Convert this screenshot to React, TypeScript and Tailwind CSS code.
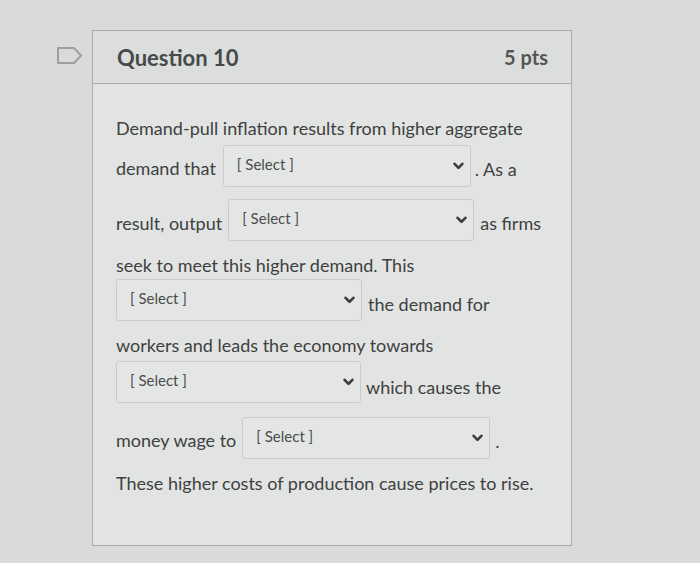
import React from "react";

function Chevron() {
  return (
    <svg width="11" height="8" viewBox="0 0 11 8" className="shrink-0">
      <path d="M1.6 1.8 L5.5 5.8 L9.4 1.8" fill="none" stroke="#3a3d3b" strokeWidth="2.6" strokeLinecap="round" strokeLinejoin="round" />
    </svg>
  );
}

function Select({ w }: { w: number }) {
  return (
    <div
      className="h-[42px] shrink-0 border border-[#c9cbca] bg-[#e4e6e5] rounded-[3px] flex items-center justify-between pl-[13px] pr-[6px]"
      style={{ width: w }}
    >
      <span className="text-[15px] text-[#4a4d4b] -mt-[3px]">[ Select ]</span>
      <Chevron />
    </div>
  );
}

export default function App() {
  return (
    <div
      className="w-[700px] h-[563px] bg-[#d9dbda] overflow-hidden relative"
      style={{ fontFamily: "Lato, 'Open Sans', sans-serif" }}
    >
      <div className="absolute left-[56px] top-[46px]">
        <svg width="27" height="19" viewBox="0 0 27 19">
          <path d="M2 2 H18 L25 9.5 L18 17 H2 Z" fill="none" stroke="#9ea09f" strokeWidth="2" strokeLinejoin="round" />
        </svg>
      </div>
      <div className="ml-[92px] mt-[30px] w-[480px] h-[516px] border border-[#a9abaa] bg-[#e2e4e3] flex flex-col">
        <div className="h-[53px] shrink-0 bg-[#dcdedd] border-b border-[#a9abaa] flex items-center justify-between pl-[24px] pr-[23px]">
          <span className="text-[22px] font-bold text-[#474a48]">Question 10</span>
          <span className="text-[20px] font-bold text-[#535654]">5 pts</span>
        </div>
        <div className="pl-[23px] pt-[30px] text-[18px] text-[#3e413f] flex flex-col">
          <div className="h-[28px] flex items-center">Demand-pull inflation results from higher aggregate</div>
          <div className="mt-[3px] h-[42px] flex items-center">
            <span className="pt-[4px] mr-[7px]">demand that</span>
            <Select w={248} />
            <span className="pt-[6px] ml-[4px]">. As a</span>
          </div>
          <div className="mt-[12px] h-[42px] flex items-center">
            <span className="pt-[6px] mr-[6px]">result, output</span>
            <Select w={246} />
            <span className="pt-[6px] ml-[6px]">as firms</span>
          </div>
          <div className="mt-[10px] h-[28px] flex items-center">seek to meet this higher demand. This</div>
          <div className="h-[42px] flex items-center">
            <Select w={246} />
            <span className="pt-[8px] ml-[6px]">the demand for</span>
          </div>
          <div className="mt-[10px] h-[28px] flex items-center">workers and leads the economy towards</div>
          <div className="mt-[2px] h-[42px] flex items-center">
            <Select w={245} />
            <span className="pt-[10px] ml-[5px]">which causes the</span>
          </div>
          <div className="mt-[14px] h-[42px] flex items-center">
            <span className="pt-[4px] mr-[6px]">money wage to</span>
            <Select w={248} />
            <span className="pt-[6px] ml-[5px]">.</span>
          </div>
          <div className="mt-[10px] h-[28px] flex items-center">These higher costs of production cause prices to rise.</div>
        </div>
      </div>
    </div>
  );
}
